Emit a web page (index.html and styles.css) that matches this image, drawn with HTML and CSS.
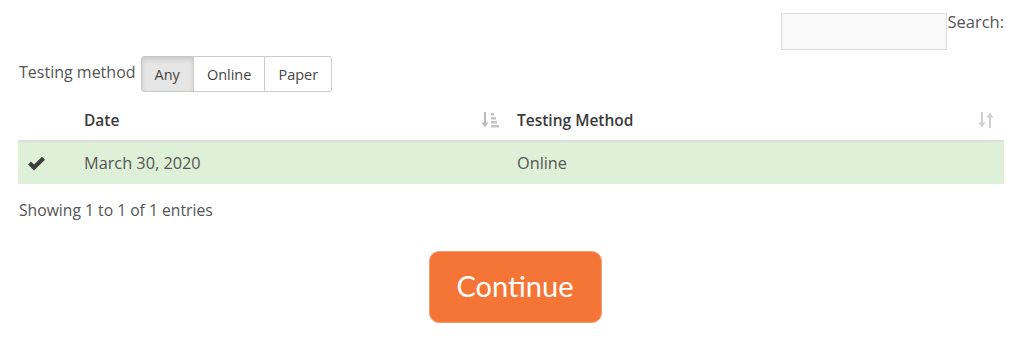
FILE: index.html
```html
<!DOCTYPE html>
<html>
<head>
<meta charset="utf-8">
<link rel="stylesheet" href="styles.css">
</head>
<body>
<div class="page">
  <div class="search-row">
    <input class="search-input" type="text" aria-label="Search">
    <label class="search-label">Search:</label>
  </div>
  <div class="filter-row">
    <span class="filter-label">Testing method</span>
    <div class="btn-group">
      <button class="btn active">Any</button>
      <button class="btn">Online</button>
      <button class="btn">Paper</button>
    </div>
  </div>
  <table class="grid">
    <thead>
      <tr>
        <th class="col-check"></th>
        <th class="col-date">
          <div class="th-inner"><span>Date</span>
            <svg class="sort-icon" width="18" height="18" viewBox="0 0 18 18">
              <rect x="3" y="1" width="2" height="12" fill="#bbb"/>
              <path d="M0.5 11.5 L4 16.5 L7.5 11.5 Z" fill="#bbb"/>
              <rect x="10" y="2" width="3" height="2.5" fill="#c4c4c4"/>
              <rect x="10" y="6" width="5" height="2.5" fill="#c4c4c4"/>
              <rect x="10" y="10" width="6" height="2.5" fill="#c4c4c4"/>
              <rect x="10" y="14" width="8" height="2.5" fill="#c4c4c4"/>
            </svg>
          </div>
        </th>
        <th class="col-method">
          <div class="th-inner"><span>Testing Method</span>
            <svg class="sort-icon" width="18" height="18" viewBox="0 0 18 18">
              <rect x="4" y="1" width="2" height="12" fill="#cfcfcf"/>
              <path d="M1.5 11.5 L5 16.5 L8.5 11.5 Z" fill="#cfcfcf"/>
              <rect x="12" y="5" width="2" height="12" fill="#cfcfcf"/>
              <path d="M9.5 6.5 L13 1.5 L16.5 6.5 Z" fill="#cfcfcf"/>
            </svg>
          </div>
        </th>
      </tr>
    </thead>
    <tbody>
      <tr class="selected">
        <td class="col-check">
          <svg width="19" height="15" viewBox="0 0 19 15">
            <path d="M1 8.5 L4 5.5 L7 8.5 L15 0.8 L18 3.8 L7 14.5 Z" fill="#3d3d3d"/>
          </svg>
        </td>
        <td>March 30, 2020</td>
        <td>Online</td>
      </tr>
    </tbody>
  </table>
  <div class="info">Showing 1 to 1 of 1 entries</div>
  <div class="actions">
    <button class="continue">Continue</button>
  </div>
</div>
</body>
</html>
```
FILE: styles.css
```css
html, body {
  margin: 0;
  padding: 0;
  background: #fff;
}
body {
  font-family: "Open Sans", Lato, Arial, sans-serif;
  color: #555;
  font-size: 15px;
}
.page {
  padding: 13px 28px 0 18px;
}
.search-row {
  display: flex;
  justify-content: flex-end;
  align-items: flex-start;
}
.search-input {
  width: 166px;
  height: 37px;
  box-sizing: border-box;
  border: 1px solid #ddd;
  background: #f9f9f9;
  margin: 0;
}
.search-label {
  font-size: 16.5px;
  color: #555;
  margin-top: 0;
  line-height: 18px;
}
.filter-row {
  display: flex;
  align-items: center;
  margin-top: 6px;
  padding-left: 1px;
}
.filter-label {
  margin-right: 5px;
  font-size: 16px;
  color: #555;
  position: relative;
  top: -2px;
}
.btn-group {
  display: flex;
}
.btn {
  font-family: inherit;
  font-size: 14.5px;
  color: #444;
  background: #fff;
  border: 1px solid #ccc;
  height: 36px;
  padding: 0 13px;
  margin: 0 -1px 0 0;
}
.btn.active {
  background: #e6e6e6;
  box-shadow: inset 0 3px 5px rgba(0,0,0,0.125);
  border-color: #c8c8c8;
}
.btn:first-child { border-radius: 3px 0 0 3px; }
.btn:last-child { border-radius: 0 3px 3px 0; }
.grid {
  width: 100%;
  border-collapse: collapse;
  margin-top: 8px;
}
.grid th {
  text-align: left;
  font-weight: 600;
  font-size: 15.5px;
  color: #3a3a3a;
  height: 40px;
  padding: 0 9px;
  border-bottom: 2px solid #ddd;
}
.th-inner {
  display: flex;
  justify-content: space-between;
  align-items: center;
}
.sort-icon {
  display: block;
  flex: none;
}
.col-check {
  width: 39px;
}
.col-date {
  width: 415px;
}
.grid td {
  height: 42px;
  padding: 0 9px;
  font-size: 16.3px;
  color: #555;
}
.selected td {
  background: #dff0d8;
}
.selected svg {
  display: block;
}
.info {
  margin-top: 15px;
  padding-left: 1px;
  font-size: 15.7px;
  color: #555;
}
.actions {
  display: flex;
  justify-content: center;
  margin-top: 30px;
  padding-left: 8px;
}
.continue {
  font-family: Lato, "Open Sans", Arial, sans-serif;
  width: 173px;
  height: 72px;
  background: #f47535;
  color: #fff;
  border: 1px solid #f0a070;
  border-radius: 10px;
  font-size: 29px;
  padding: 0 0 3px 0;
}
```
